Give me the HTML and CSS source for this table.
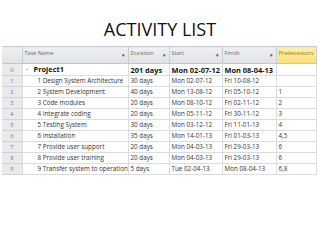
FILE: index.html
```html
<!DOCTYPE html>
<html lang="en">
  <head>
    <meta charset="UTF-8" />
    <title>Activity List</title>
    <link rel="stylesheet" href="styles.css">
  </head>
  <body>
    <h1>ACTIVITY LIST</h1>

    <table class="gantt">
      <colgroup>
        <col class="c-id" />
        <col class="c-name" />
        <col class="c-dur" />
        <col class="c-start" />
        <col class="c-finish" />
        <col class="c-pred" />
      </colgroup>
      <thead>
        <tr>
          <th></th>
          <th>Task Name <span class="arrow">&#9662;</span></th>
          <th>Duration <span class="arrow">&#9662;</span></th>
          <th>Start <span class="arrow">&#9662;</span></th>
          <th>Finish <span class="arrow">&#9662;</span></th>
          <th class="pred">Predecessors</th>
        </tr>
      </thead>
      <tbody>
        <tr class="summary">
          <td class="id">0</td>
          <td><span class="toggle">&minus;</span>Project1</td>
          <td>201 days</td>
          <td>Mon 02-07-12</td>
          <td>Mon 08-04-13</td>
          <td></td>
        </tr>
        <tr>
          <td class="id">1</td>
          <td class="task">1 Design System Architecture</td>
          <td>30 days</td>
          <td>Mon 02-07-12</td>
          <td>Fri 10-08-12</td>
          <td></td>
        </tr>
        <tr>
          <td class="id">2</td>
          <td class="task">2 System Development</td>
          <td>40 days</td>
          <td>Mon 13-08-12</td>
          <td>Fri 05-10-12</td>
          <td>1</td>
        </tr>
        <tr>
          <td class="id">3</td>
          <td class="task">3 Code modules</td>
          <td>20 days</td>
          <td>Mon 08-10-12</td>
          <td>Fri 02-11-12</td>
          <td>2</td>
        </tr>
        <tr>
          <td class="id">4</td>
          <td class="task">4 Integrate coding</td>
          <td>20 days</td>
          <td>Mon 05-11-12</td>
          <td>Fri 30-11-12</td>
          <td>3</td>
        </tr>
        <tr>
          <td class="id">5</td>
          <td class="task">5 Testing System</td>
          <td>30 days</td>
          <td>Mon 03-12-12</td>
          <td>Fri 11-01-13</td>
          <td>4</td>
        </tr>
        <tr>
          <td class="id">6</td>
          <td class="task">6 Installation</td>
          <td>35 days</td>
          <td>Mon 14-01-13</td>
          <td>Fri 01-03-13</td>
          <td>4,5</td>
        </tr>
        <tr>
          <td class="id">7</td>
          <td class="task">7 Provide user support</td>
          <td>20 days</td>
          <td>Mon 04-03-13</td>
          <td>Fri 29-03-13</td>
          <td>6</td>
        </tr>
        <tr>
          <td class="id">8</td>
          <td class="task">8 Provide user training</td>
          <td>20 days</td>
          <td>Mon 04-03-13</td>
          <td>Fri 29-03-13</td>
          <td>6</td>
        </tr>
        <tr>
          <td class="id">9</td>
          <td class="task">9 Transfer system to operation</td>
          <td>5 days</td>
          <td>Tue 02-04-13</td>
          <td>Mon 08-04-13</td>
          <td>6,8</td>
        </tr>
      </tbody>
    </table>
  </body>
</html>
```

FILE: styles.css
```css
* {
  margin: 0;
  padding: 0;
  box-sizing: border-box;
}
body {
  background: #fff;
  font-family: "Open Sans", sans-serif;
  width: 320px;
  height: 240px;
  overflow: hidden;
}
h1 {
  font-family: "Open Sans", sans-serif;
  font-weight: 400;
  font-size: 18px;
  line-height: 24px;
  color: #111;
  text-align: center;
  padding-top: 17px;
  height: 46px;
  letter-spacing: 0;
}
.gantt {
  margin-left: 2px;
  width: 314px;
  border-collapse: collapse;
  table-layout: fixed;
  font-size: 6.3px;
  color: #333;
  border-top: 1px solid #c8cdd3;
}
.c-id { width: 20px; }
.c-name { width: 106px; }
.c-dur { width: 41px; }
.c-start { width: 53px; }
.c-finish { width: 54px; }
.c-pred { width: 40px; }

th {
  height: 17px;
  font-weight: 400;
  font-size: 5.6px;
  color: #6a6a6a;
  text-align: left;
  vertical-align: top;
  padding: 2px 2px 0;
  background: linear-gradient(#eef0f2, #dfe2e5);
  border-right: 1px solid #c9ccd0;
  border-bottom: 1px solid #c3c6ca;
  white-space: nowrap;
  position: relative;
}
th .arrow {
  position: absolute;
  right: 3px;
  top: 5px;
  font-size: 5px;
  color: #444;
}
th.pred {
  background: linear-gradient(#fff0a8, #fbe07a);
  color: #8a7a2a;
}
td {
  height: 11px;
  padding: 0 2px;
  line-height: 10px;
  border-right: 1px solid #dadcdf;
  border-bottom: 1px solid #dadcdf;
  white-space: nowrap;
  overflow: hidden;
}
td.id {
  background: #e8eaed;
  color: #777;
  text-align: center;
  font-size: 5.6px;
  border-bottom: 1px solid #cfd2d6;
}
td.task {
  padding-left: 15px;
}
.summary td {
  font-weight: 700;
  font-size: 7.4px;
  color: #111;
}
.summary td.id {
  font-weight: 400;
  font-size: 5.6px;
  color: #777;
}
.toggle {
  display: inline-block;
  width: 6px;
  margin-left: 1px;
  margin-right: 2px;
  font-weight: 400;
  color: #888;
  font-size: 6px;
}
```
